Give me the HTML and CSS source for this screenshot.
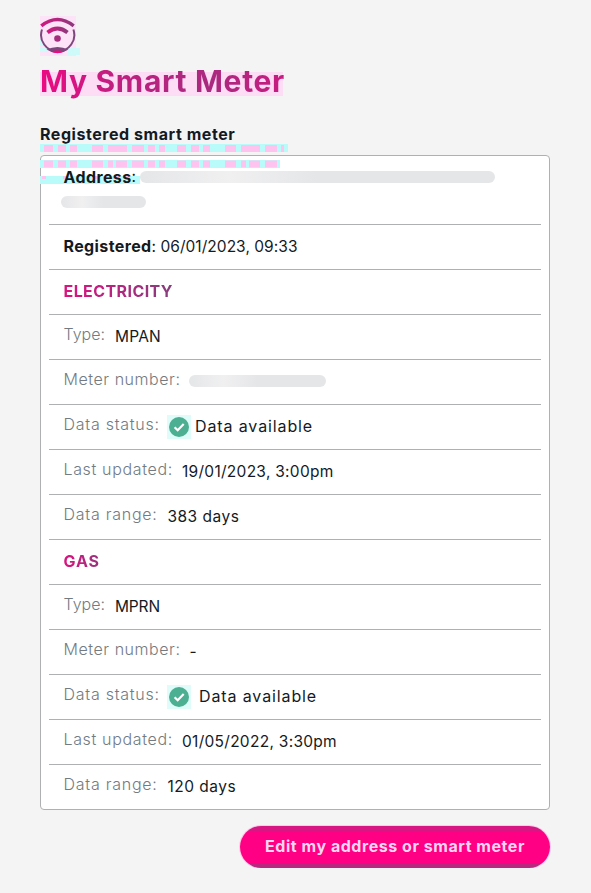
FILE: index.html
```html
<!DOCTYPE html>
<html lang="en">
<head>
<meta charset="utf-8">
<meta name="viewport" content="width=device-width, initial-scale=1">
<title>My Smart Meter</title>
<link rel="stylesheet" href="styles.css">
</head>
<body>
<main class="page">
  <svg class="logo" width="40" height="40" viewBox="0 0 40 40" aria-hidden="true">
    <defs><linearGradient id="brand" x1="0" y1="0" x2="1" y2="0"><stop offset="0" stop-color="#d0187f"/><stop offset="1" stop-color="#8c397b"/></linearGradient></defs>
    <rect class="logo-halo" width="36" height="40"/>
    <path class="logo-tint" d="M0 32h8v4H0zM28 32h12v7H28zM0 24h4v6H0z"/>
    <path d="M2 13.5A16.6 16.6 0 1 0 33.4 13.5" fill="none" stroke="#7c477c" stroke-width="2"/>
    <path d="M1.3 9.8Q17.5-3 33.7 9.8" fill="none" stroke="url(#brand)" stroke-width="3.4"/>
    <path d="M7.5 16.5Q17.5 8.5 27.5 16.5" fill="none" stroke="url(#brand)" stroke-width="3.8"/>
    <circle cx="17.5" cy="22.5" r="3.3" fill="#a52d7e"/>
    <path d="M6.5 33.5Q17.5 28.5 28.5 33.5Q17.5 40.5 6.5 33.5Z" fill="#7c477c"/>
    <path d="M10.5 35.5Q17.5 33.5 24.5 35.5Q17.5 39 10.5 35.5Z" fill="#f2087f"/>
  </svg>
  <h1 class="title"><span class="title-text">My Smart Meter</span></h1>
  <h2 class="subtitle">Registered smart meter</h2>

  <section class="card">
    <svg class="accent" width="248" height="42" viewBox="0 0 248 42" aria-hidden="true">
      <path class="accent-cyan" d="M0 0h248v8H0zM0 16h240v8H0zM0 32h100v8H0z"/>
      <g class="accent-pink"><path stroke-width="7" stroke-dasharray="9 5 8 4 7 15 11 5 19 5 12 4 7 4 6 12" d="M4 4.500H244"/><path stroke-width="7" stroke-dasharray="9 5 8 4 7 15 11 5 5 3 11 5 12 4 7 4 6 12" d="M4 20H240"/><path stroke-width="3" stroke-dasharray="4 17 5 24 5 6 5 5 7 6" d="M2 33.500H100"/></g>
    </svg>
    <div class="row address">
      <div class="address-line"><b class="k-address">Address</b><span>:</span><span class="skeleton sk-long"></span></div>
      <span class="skeleton sk-short"></span>
    </div>
    <div class="row"><b class="k-registered">Registered</b><span class="v-registered">: 06/01/2023, 09:33</span></div>
    <div class="row"><h3 class="section s-elec">ELECTRICITY</h3></div>
    <div class="row"><span class="label l-type">Type:</span><span class="value v-mpan">MPAN</span></div>
    <div class="row"><span class="label l-number">Meter number:</span><span class="skeleton sk-number"></span></div>
    <div class="row"><span class="label l-status">Data status:</span>
      <svg class="check" width="24" height="24" viewBox="0 0 24 24" aria-hidden="true"><rect class="check-halo" width="24" height="24"/><circle cx="12" cy="12" r="10" fill="#4caf91"/><path d="M7.600 12.200l3.100 3 6-6.200" fill="none" stroke="#fff" stroke-width="2.200"/></svg>
      <span class="value v-avail">Data available</span></div>
    <div class="row"><span class="label l-updated">Last updated:</span><span class="value v-date">19/01/2023, 3:00pm</span></div>
    <div class="row"><span class="label l-range">Data range:</span><span class="value v-days">383 days</span></div>
    <div class="row"><h3 class="section s-gas">GAS</h3></div>
    <div class="row"><span class="label l-type">Type:</span><span class="value v-mprn">MPRN</span></div>
    <div class="row"><span class="label l-number">Meter number:</span><span class="value v-none">-</span></div>
    <div class="row"><span class="label l-status">Data status:</span>
      <svg class="check" width="24" height="24" viewBox="0 0 24 24" aria-hidden="true"><rect class="check-halo" width="24" height="24"/><circle cx="12" cy="12" r="10" fill="#4caf91"/><path d="M7.600 12.200l3.100 3 6-6.200" fill="none" stroke="#fff" stroke-width="2.200"/></svg>
      <span class="value v-avail spaced">Data available</span></div>
    <div class="row"><span class="label l-updated">Last updated:</span><span class="value v-date">01/05/2022, 3:30pm</span></div>
    <div class="row last"><span class="label l-range">Data range:</span><span class="value v-days">120 days</span></div>
  </section>

  <div class="actions"><button class="edit" type="button">Edit my address or smart meter</button></div>
</main>
</body>
</html>
```
FILE: styles.css
```css
* { box-sizing: border-box; }
body {
  margin: 0;
  background: #f4f4f4;
  color: #141a1f;
  font: 400 15.5px/24px Inter, "Liberation Sans", sans-serif;
}
.page { display: flex; flex-direction: column; width: 510px; margin: 0 0 0 40px; padding-top: 16px; }
.logo { display: block; flex: none; }
.logo-halo { fill: #fde3f7; }
.logo-tint { fill: #cffafa; }
.title {
  margin: 4px 0 0; height: 42px; font-size: 30px; line-height: 42px; font-weight: 700; letter-spacing: .69px; white-space: nowrap;
  background: linear-gradient(#fddcf5, #fddcf5) 0 12px / 243px 24px no-repeat;
}
.title-text {
  color: transparent;
  background: linear-gradient(90deg, #ec0a82, #c01f80 30%, #a92a7f 70%, #c81c80);
  -webkit-background-clip: text;
  background-clip: text;
}
.subtitle { margin: 20px 0 0; font-size: 16px; line-height: 24px; font-weight: 700; letter-spacing: .55px; }
.card { position: relative; margin-top: 9px; height: 655px; padding: 0 8px; background: #fff; border: 1px solid #aeb0b1; border-radius: 4px; }
.accent { position: absolute; left: -1px; top: -12px; }
.accent-cyan { fill: #b9fbfa; }
.accent-pink { fill: none; stroke: #ffc3f0; }
.row { position: relative; display: flex; align-items: center; height: 45px; padding: 0 14.5px; border-bottom: 1px solid #aeb0b1; white-space: nowrap; }
.last { height: 44px; border-bottom: 0; }
.address { height: 69px; flex-direction: column; align-items: flex-start; padding-top: 9px; }
.address-line { display: flex; align-items: center; height: 24px; }
b { font-size: 16px; font-weight: 700; letter-spacing: .38px; line-height: 22px; margin-top: -1px; }
.k-registered { margin-top: -2px; }
.v-registered { letter-spacing: .04px; }
.skeleton { display: block; height: 12px; border-radius: 6px; background: linear-gradient(90deg, #e5e6e8, #f0f0f1 25%, #e5e6e8 50%); }
.sk-long { width: 355px; margin-left: 4px; }
.sk-short { width: 85px; margin: 7px 0 0 -2.5px; }
.sk-number { width: 137px; margin: -2px 0 0 8px; }
.section { margin: -2px 0 0; font-size: 16px; line-height: 24px; font-weight: 700; color: transparent; -webkit-background-clip: text; background-clip: text; }
.s-elec { letter-spacing: .42px; background-image: linear-gradient(90deg, #dc1280, #a92a7f 60%, #853f7c); }
.s-gas { letter-spacing: .9px; background-image: linear-gradient(90deg, #dc1280, #96347d); }
.label { font-size: 16px; font-weight: 300; color: #737b82; position: relative; top: -3px; }
.l-type { width: 42.5px; }
.l-number { width: 117px; letter-spacing: .55px; }
.l-status { width: 96px; letter-spacing: .74px; }
.l-updated { width: 109.5px; letter-spacing: .65px; }
.l-range { width: 95px; letter-spacing: .75px; }
.value { margin-left: 9px; }
.v-mpan { letter-spacing: .21px; }
.v-mprn { letter-spacing: -.14px; }
.v-avail { margin: -2px 0 0 4.5px; font-size: 16px; letter-spacing: .88px; }
.v-avail.spaced { margin-left: 8.5px; }
.v-date { letter-spacing: .28px; }
.v-days { letter-spacing: .48px; }
.check { flex: none; margin-left: 7px; }
.check-halo { fill: #e0fcfa; }
.actions { display: flex; justify-content: flex-end; margin-top: 16px; }
.edit {
  width: 310px; height: 42px; padding: 0 0 2px;
  border: 0; border-radius: 21px;
  background: linear-gradient(180deg, #d81683 0 6px, #ff0085 6px 38px, #b8287f 38px);
  box-shadow: 0 0 0 1px #fdc9ee;
  color: #ffd5f2;
  font: 700 16px/40px Inter, "Liberation Sans", sans-serif;
  letter-spacing: .54px;
  white-space: nowrap;
}
```
